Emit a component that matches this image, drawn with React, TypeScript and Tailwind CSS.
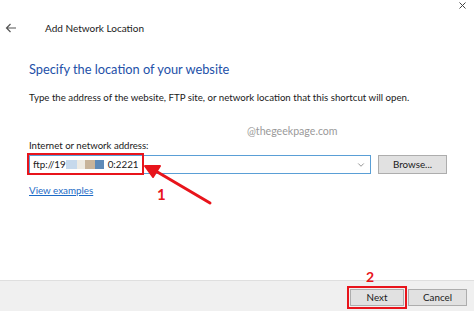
import { ChevronDown } from 'lucide-react';

const FONT = { fontFamily: 'Lato, "Noto Sans", sans-serif' };

function RedArrow() {
  return (
    <svg className="absolute left-[140px] top-[160px]" width="76" height="50" viewBox="0 0 76 50">
      <path d="M70 43 L14 10" stroke="#e8141b" strokeWidth="3" strokeLinecap="round" />
      <path d="M5 6 L20 6 L13 17 Z" fill="#e8141b" stroke="#e8141b" strokeWidth="2" strokeLinejoin="round" />
    </svg>
  );
}

export default function App() {
  return (
    <div style={FONT} className="relative w-[474px] h-[311px] bg-white overflow-hidden flex flex-col text-[#1a1a1a]">
      <div className="h-[280px] flex flex-col">
        <div className="flex justify-end pr-[8px] pt-[2px] h-[14px]">
          <svg width="7" height="7" viewBox="0 0 7 7">
            <path d="M0.5 0.5 L6.5 6.5 M6.5 0.5 L0.5 6.5" stroke="#444" strokeWidth="1" />
          </svg>
        </div>
        <div className="flex items-center h-[26px] mt-[1px]">
          <svg className="ml-[5px]" width="12" height="10" viewBox="0 0 12 10">
            <path d="M11 5 H1.5 M5.5 1 L1.5 5 L5.5 9" stroke="#555" strokeWidth="1.2" fill="none" />
          </svg>
          <span className="ml-[28px] text-[10px]">Add Network Location</span>
        </div>
        <div className="pl-[29px] pr-[20px]">
          <h1 className="mt-[19px] text-[12.8px] leading-[18px] text-[#2350a8]">
            Specify the location of your website
          </h1>
          <p className="mt-[13px] text-[9.7px] leading-[13px] whitespace-nowrap">
            Type the address of the website, FTP site, or network location that this shortcut will open.
          </p>
          <div className="mt-[20px] ml-[218px] text-[10.6px] leading-[14px] text-[#9a9a9a]">@thegeekpage.com</div>
          <div className="mt-[1px] text-[9.6px] leading-[13px]">Internet or network address:</div>
          <div className="mt-[3px] flex items-center gap-[7px]">
            <div className="w-[342px] h-[19px] border border-[#5a9fd6] flex items-center justify-between pl-[3px] pr-[4px]">
              <div className="flex items-center text-[9.8px]">
                <span>ftp://19</span>
                <span className="w-[11px] h-[9px] bg-[#c6d9ec]" />
                <span className="w-[8px] h-[9px] bg-[#eeebe3]" />
                <span className="w-[10px] h-[9px] bg-[#c8b49a]" />
                <span className="w-[9px] h-[9px] bg-[#5d8ab8]" />
                <span className="ml-[4px]">0:2221</span>
              </div>
              <ChevronDown size={10} strokeWidth={1.5} color="#555" />
            </div>
            <button className="w-[69px] h-[19px] bg-[#e1e1e1] border border-[#adadad] text-[9.8px]">Browse...</button>
          </div>
          <div className="mt-[10px] text-[9.8px] leading-[13px] text-[#1d6bc6] underline">View examples</div>
        </div>
      </div>
      <div className="flex-1 bg-[#f0f0f0] border-t border-[#dfdfdf] flex items-start justify-end gap-[4px] pr-[7px] pt-[8px]">
        <button className="w-[54px] h-[17px] bg-[#e1e1e1] border border-[#adadad] text-[9.8px] leading-[15px] outline outline-[2px] outline-[#e8141b] outline-offset-[1px]">
          Next
        </button>
        <button className="w-[59px] h-[17px] bg-[#e1e1e1] border border-[#adadad] text-[9.8px] leading-[15px]">
          Cancel
        </button>
      </div>

      <div className="absolute left-[27px] top-[153px] w-[117px] h-[22px] border-[2.5px] border-[#e8141b]" />
      <RedArrow />
      <span className="absolute left-[157px] top-[185px] text-[15px] leading-[18px] font-bold text-[#e8141b]">1</span>
      <span className="absolute left-[366px] top-[269px] text-[14px] leading-[16px] font-bold text-[#e8141b]">2</span>
    </div>
  );
}
